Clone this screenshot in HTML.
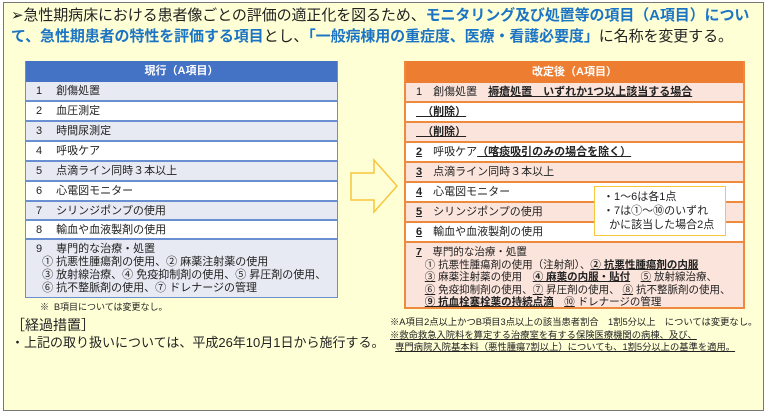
<!DOCTYPE html>
<html><head><meta charset="utf-8"><style>
*{margin:0;padding:0;box-sizing:border-box}
body{width:768px;height:416px;background:#fff;font-family:"Liberation Sans","Noto Sans CJK JP",sans-serif;position:relative;overflow:hidden;color:#222}
.frame{position:absolute;left:3px;top:2px;width:761px;height:409px;background:#ffffd6;border:1px solid #777}
.ab{position:absolute;white-space:nowrap}
.t{font-size:15px;line-height:20px;letter-spacing:-0.1px}
.b{color:#1b74c4;font-weight:bold}
.tbl{position:absolute}
.row{position:absolute;left:0;right:0;font-size:11px;line-height:19px;padding-left:10px;white-space:nowrap}
.L .row{background:#e8eaf3;border-bottom:2px solid #6a8fd0}
.L .w{background:#fff}
.R .row{background:#fbe4dc;border-bottom:2px solid #ee8a3e}
.R .w{background:#fff}
.hd{position:absolute;left:0;right:0;top:0;color:#fff;font-weight:bold;font-size:11px;text-align:center}
u{text-decoration:underline}
</style></head><body>
<div class="frame"></div>
<div class="ab t" style="left:11px;top:6px">➢急性期病床における患者像ごとの評価の適正化を図るため、<span class="b">モニタリング及び処置等の項目（A項目）につい</span></div>
<div class="ab t" style="left:11px;top:27px"><span class="b">て、急性期患者の特性を評価する項目</span>とし、<span class="b">「一般病棟用の重症度、医療・看護必要度」</span>に名称を変更する。</div>

<div class="tbl L" style="left:25px;top:61px;width:313px;height:237px;border:1px solid #6a8fd0;border-top:none">
<div class="hd" style="height:21px;line-height:21px;background:#4472c4">現行（A項目）</div>
<div class="row" style="top:21px;height:20px">1　 創傷処置</div>
<div class="row w" style="top:41px;height:20px">2　 血圧測定</div>
<div class="row" style="top:61px;height:20px">3　 時間尿測定</div>
<div class="row w" style="top:81px;height:20px">4　 呼吸ケア</div>
<div class="row" style="top:101px;height:20px">5　 点滴ライン同時３本以上</div>
<div class="row w" style="top:121px;height:20px">6　 心電図モニター</div>
<div class="row" style="top:141px;height:19px">7　 シリンジポンプの使用</div>
<div class="row w" style="top:160px;height:19px">8　 輸血や血液製剤の使用</div>
<div class="row" style="top:179px;height:57px;border:none;line-height:13px;padding-top:3px">9　 専門的な治療・処置<br>&nbsp;&nbsp;① 抗悪性腫瘍剤の使用、② 麻薬注射薬の使用<br>&nbsp;&nbsp;③ 放射線治療、④ 免疫抑制剤の使用、⑤ 昇圧剤の使用、<br>&nbsp;&nbsp;⑥ 抗不整脈剤の使用、⑦ ドレナージの管理</div>
</div>

<svg class="ab" style="left:348px;top:158px" width="52" height="58"><polygon points="3,15 26,15 26,2 49,28 26,54 26,42 3,42" fill="none" stroke="#f6c63c" stroke-width="1.5"/></svg>

<div class="tbl R" style="left:404px;top:61px;width:341px;height:248px;border:2px solid #ee8a3e;border-top:none">
<div class="hd" style="height:22px;line-height:22px;background:#ed7d31">改定後（A項目）</div>
<div class="row" style="top:22px;height:20px">1　創傷処置　<b><u>褥瘡処置　いずれか1つ以上該当する場合</u></b></div>
<div class="row w" style="top:42px;height:20px"><b><u>&nbsp;&nbsp;（削除）</u></b></div>
<div class="row" style="top:62px;height:20px"><b><u>&nbsp;&nbsp;（削除）</u></b></div>
<div class="row w" style="top:82px;height:20px"><b><u>2</u></b>　呼吸ケア<b><u>（喀痰吸引のみの場合を除く）</u></b></div>
<div class="row" style="top:102px;height:20px"><b><u>3</u></b>　点滴ライン同時３本以上</div>
<div class="row w" style="top:122px;height:20px"><b><u>4</u></b>　心電図モニター</div>
<div class="row" style="top:142px;height:20px"><b><u>5</u></b>　シリンジポンプの使用</div>
<div class="row w" style="top:162px;height:20px"><b><u>6</u></b>　輸血や血液製剤の使用</div>
<div class="row" style="top:182px;height:64px;border:none;line-height:12.6px;padding-top:3px;font-size:10.5px"><b><u>7</u></b>　専門的な治療・処置<br>&nbsp;&nbsp;&nbsp;① 抗悪性腫瘍剤の使用（注射剤）、<b><u>② 抗悪性腫瘍剤の内服</u></b><br>&nbsp;&nbsp;&nbsp;<u>③</u> 麻薬注射薬の使用　<b><u>④ 麻薬の内服・貼付</u></b>　<u>⑤</u> 放射線治療、<br>&nbsp;&nbsp;&nbsp;<u>⑥</u> 免疫抑制剤の使用、<u>⑦</u> 昇圧剤の使用、 <u>⑧</u> 抗不整脈剤の使用、<br>&nbsp;&nbsp;&nbsp;<b><u>⑨ 抗血栓塞栓薬の持続点滴</u></b>　<u>⑩</u> ドレナージの管理</div>
</div>

<div class="ab" style="left:594px;top:186px;width:132px;height:50px;background:#fff;border:1px solid #f6c63c;font-size:11px;line-height:14px;padding:3px 0 0 8px">・1～6は各1点<br>・7は①～⑩のいずれ<br>&nbsp;&nbsp;かに該当した場合2点</div>

<div class="ab" style="left:40px;top:300px;font-size:9px">※&nbsp; B項目については変更なし。</div>
<div class="ab" style="left:11px;top:315px;font-size:14px">［経過措置］</div>
<div class="ab" style="left:11px;top:332px;font-size:13px">・上記の取り扱いについては、平成26年10月1日から施行する。</div>
<div class="ab" style="left:390px;top:316px;font-size:9.3px;line-height:12.5px">※A項目2点以上かつB項目3点以上の該当患者割合　1割5分以上　については変更なし。<br><u>※救命救急入院料を算定する治療室を有する保険医療機関の病棟、及び、</u><br>&nbsp;&nbsp;<u>専門病院入院基本料（悪性腫瘍7割以上）についても、1割5分以上の基準を適用。</u></div>
</body></html>
